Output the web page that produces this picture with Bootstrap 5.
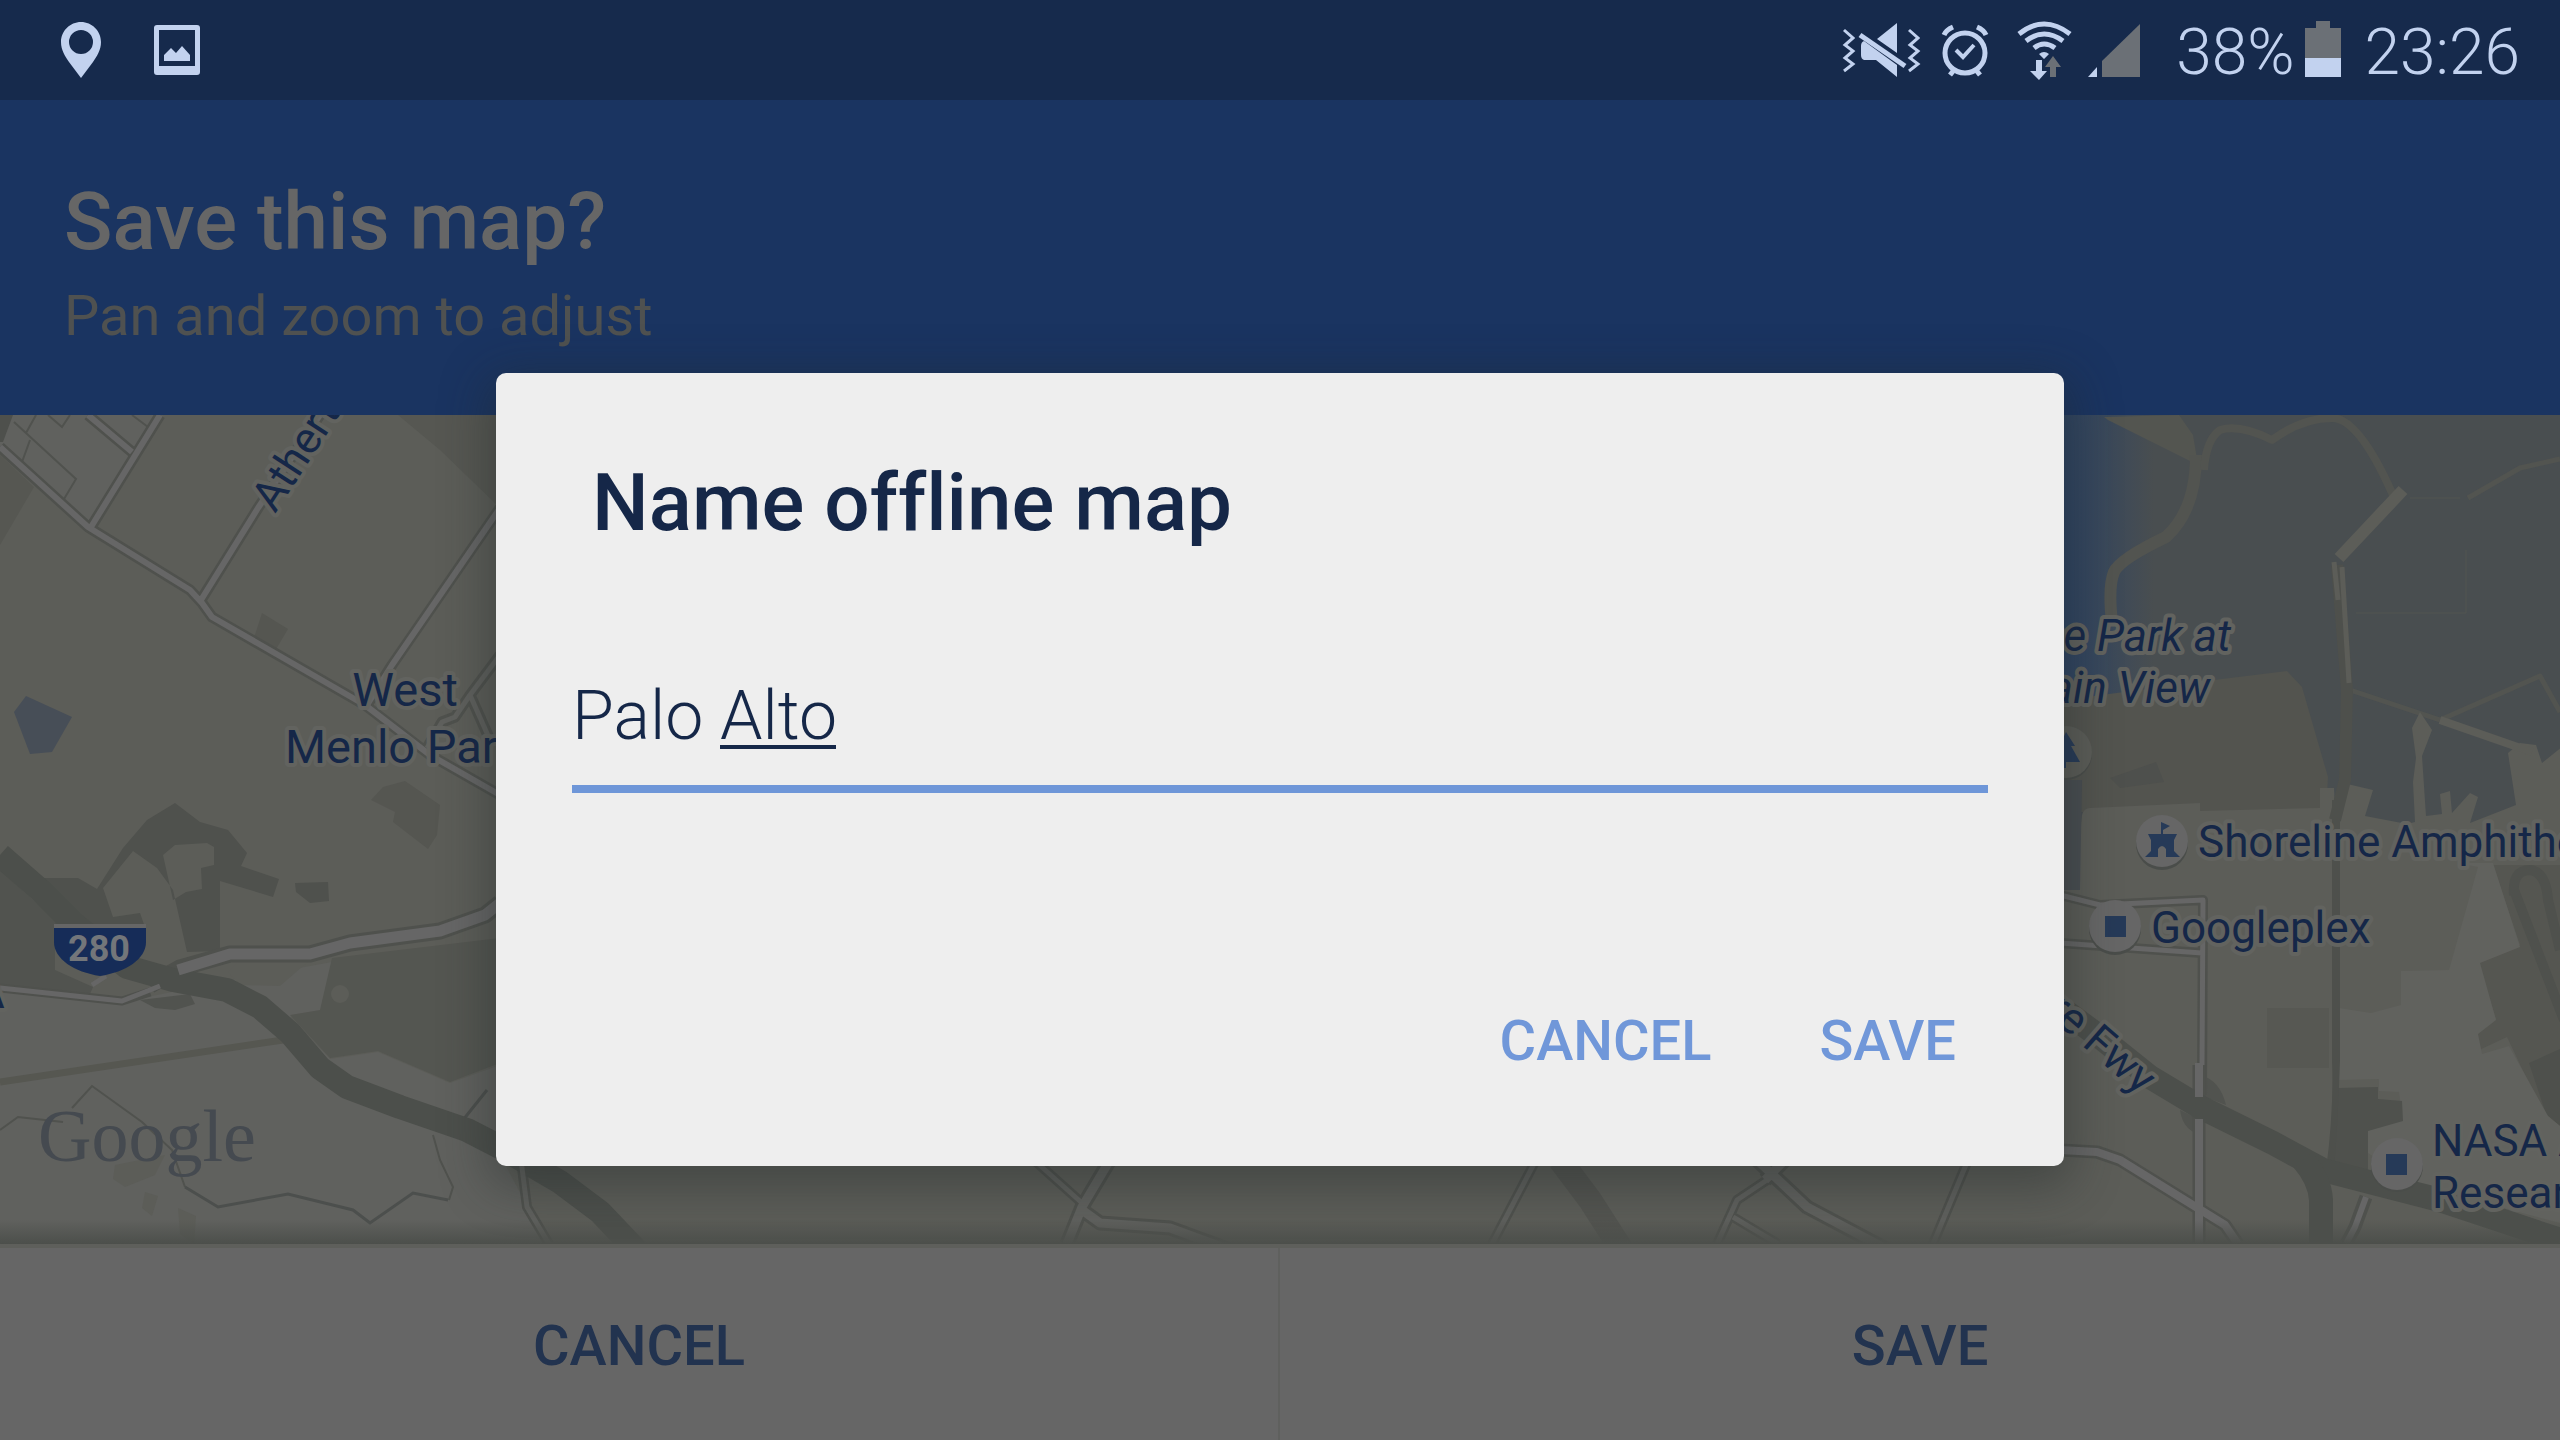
<!DOCTYPE html>
<html lang="en">
<head>
<meta charset="utf-8">
<meta name="viewport" content="width=device-width, initial-scale=1">
<title>Name offline map</title>
<link href="https://cdn.jsdelivr.net/npm/bootstrap@5.3.0/dist/css/bootstrap.min.css" rel="stylesheet">
<style>
  body { font-family: Roboto, "Noto Sans", sans-serif; background: #666; color: #152748; }
  .status-bar { height: 100px; background: #162a4c; color: #c2d2ef; padding: 0 40px 0 58px; }
  .status-bar svg { height: 60px; flex: none; }
  .status-icons { gap: 16px; }
  .status-text { font-size: 64px; line-height: 64px; font-weight: 300; padding-top: 6px; }
  .app-head { background: #1a3461; padding: 74px 64px 67px; }
  .title-text { font-size: 80px; line-height: 96px; font-weight: 500; font-variant-ligatures: none; }
  .app-head .title-text { color: #666; }
  .sub-text { font-size: 56px; line-height: 64px; color: #4f5150; margin-top: 14px; }
  .map-area { background: #5c5d58; min-height: 400px; }
  .map-area svg { position: absolute; inset: 0; width: 100%; height: 100%; }
  .map-area::after { content: ""; position: absolute; inset: auto 0 0 0; height: 24px; background: linear-gradient(transparent, #4c4f4b); }
  .action-bar { height: 196px; background: #666; border-top: 4px solid #5e5f5b; }
  .flat-btn { font-size: 56px; line-height: 64px; font-weight: 500; border: 0; background: none; border-radius: 0; padding: 0 32px; }
  .action-bar .flat-btn { color: #22334f; padding-top: 4px; }
  .action-bar .flat-btn:first-child { border-right: 2px solid #5f605e; }
  .dialog-layer { position: absolute; inset: 98px 0 0 0; }
  .name-dialog { width: 61.25%; background: #eee; border: 0; border-radius: 10px; padding: 82px 76px 93px; box-shadow: 0 12px 48px 8px rgba(34, 40, 40, .42); color: #152748; }
  .name-dialog .title-text { padding-left: 20px; margin-bottom: 123px; }
  .name-field { font-size: 68px; line-height: 84px; height: 119px; font-weight: 300; color: #152748; background: none; border: 0; border-bottom: 8px solid #6e96d8; border-radius: 0; padding: 0 0 27px; }
  .name-field:focus { background: none; box-shadow: none; border-color: #6e96d8; color: #152748; }
  .compose-line { position: absolute; left: 148px; top: 71px; width: 116px; height: 4px; background: #152748; }
  .dialog-actions { margin-top: 216px; gap: 44px; }
  .dialog-actions .flat-btn { color: #7097d9; }
  /* map drawing */
  .rd { fill: none; stroke: #666; stroke-linejoin: round; }
  .cs { fill: none; stroke: #4f514d; stroke-linejoin: round; }
  .hw { fill: none; stroke: #4c4f4b; stroke-width: 24; stroke-linejoin: round; }
  .lbl { font-size: 44px; fill: #152748; stroke: #62635f; stroke-width: 8; stroke-linejoin: round; paint-order: stroke; }
  .town { font-size: 47px; }
</style>
</head>
<body>
<div class="d-flex flex-column min-vh-100 position-relative overflow-hidden">

  <div class="status-bar d-flex align-items-center">
    <svg viewBox="58 20 46 60" width="46" aria-hidden="true"><path fill="#c2d2ef" fill-rule="evenodd" d="M81 22c-11 0-20 9-20 20 0 8 4 14 8 20l12 16 12-16c4-6 8-12 8-20 0-11-9-20-20-20zm0 8a12 12 0 1 1 0 24 12 12 0 0 1 0-24z"/></svg>
    <svg class="ms-5" viewBox="152 20 50 60" width="50" aria-hidden="true"><path fill="#c2d2ef" fill-rule="evenodd" d="M157 25h40q3 0 3 3v44q0 3-3 3h-40q-3 0-3-3V28q0-3 3-3zm2 5v36h36V30z"/><path fill="#c2d2ef" d="M164 61V55l7-7 5 5 6-7 8 9v6z"/></svg>

    <div class="status-icons d-flex align-items-center ms-auto">
      <svg viewBox="1836 20 84 60" width="84" aria-hidden="true"><g fill="none" stroke="#c2d2ef" stroke-width="3"><path d="M1840 30l9 8-8 7 8 6-8 7 8 6-9 7M1905 30l9 8-8 7 8 6-8 7 8 6-9 7"/><path stroke-width="5" d="M1856 35l45 31"/></g><path fill="#c2d2ef" d="M1893 23v30l-20-14zM1860 41l33 24v12l-21-17h-12q-3-1-3-5v-9q0-4 3-5z"/></svg>
      <svg viewBox="1936 20 54 60" width="54" aria-hidden="true"><g fill="none" stroke="#c2d2ef" stroke-width="5"><ellipse cx="1961" cy="53" rx="20" ry="20"/><path stroke-width="4" d="M1952 50l7 7 11-12"/><path d="M1940 35q2-5 9-8M1982 35q-2-5-9-8M1950 70l-4 5M1972 70l4 5"/></g></svg>
      <svg viewBox="2006 18 62 60" width="62" aria-hidden="true"><g fill="none" stroke="#c2d2ef" stroke-width="5"><path d="M2015 32q25-20 51 0M2022 39q18-14 37 0M2030 46q10-8 21 0"/></g><path fill="#c2d2ef" d="M2035 52q5-4 10 0l-5 5zM2032 58h6v11h5l-8 9-9-9h6z"/><path fill="#6b7076" d="M2049 54l8 11h-5v10h-6V65h-5z"/></svg>
      <svg viewBox="2084 20 72 60" width="72" aria-hidden="true"><path fill="#c2d2ef" d="M2084 77l9-10v10z"/><path fill="#6b7076" d="M2098 77V61l38-37v53z"/></svg>
      <span class="status-text">38%</span>
      <svg viewBox="2304 20 44 60" width="44" style="margin-left:-6px" aria-hidden="true"><path fill="#6b7076" d="M2304 28h11v-7h14v7h11v30h-36z"/><path fill="#c2d2ef" d="M2304 58h36v19h-36z"/></svg>
      <span class="status-text">23:26</span>
    </div>
  </div>

  <header class="app-head">
    <h1 class="title-text m-0">Save this map?</h1>
    <p class="sub-text mb-0">Pan and zoom to adjust</p>
  </header>

  <main class="map-area flex-grow-1 position-relative overflow-hidden">
    <svg viewBox="0 415 2560 829" preserveAspectRatio="xMidYMid slice" role="img" aria-label="Map of Palo Alto">
      <defs>
        <linearGradient id="bay"><stop offset="0" stop-color="#24406a" stop-opacity=".75"/><stop offset="1" stop-color="#24406a" stop-opacity="0"/></linearGradient>
      </defs>
      <!-- land cover, west -->
      <path fill="#60615e" d="M12 415H163L88 527 0 447V440z"/>
      <path fill="#4e504c" d="M0 415H13L3 442H0z"/>
      <path fill="#565752" d="M0 455l34 32L0 545z"/>
      <path fill="#565752" d="M398 415H500V508L440 450z"/>
      <g fill="none" stroke="#50524e" stroke-width="2"><path d="M14 422l62 57-12 20M30 440l-8 22M36 415l-10 18M48 415l14 12 8-12M132 415l16 12"/></g>
      <path fill="#474e57" d="M26 696L72 717 52 752 30 754 14 712z"/>
      <path fill="#555651" d="M262 613l26 16-13 22-21-13z"/>
      <path fill="#555651" d="M371 800l12-13 22-6 35 24-3 30-9 14-35-27 2-10z"/>
      <path fill="#4f514d" fill-rule="evenodd" d="M147 820L175 803 200 822 228 830 247 853 241 866 279 879 273 897 220 881V951L187 952 173 890 157 868 133 851 103 888 113 917 140 913 146 930 55 925 40 878H78L97 889 123 848zM163 855L173 900 186 892 202 889 201 868 214 865V847L207 843 175 845z"/>
      <path fill="#4f514d" d="M295 883l33-1 1 19-19 2-14-11z"/>
      <path fill="#51534f" d="M0 870l55 50v50l38 17-3 7-90-6z"/>
      <path fill="#60615e" d="M0 988l122 14 100-20 110-20-12 50-30 5 40 42 48-7 72 31 50-18v90l50 94H0z"/>
      <path fill="#545651" d="M332 958L500 938v125l-50 19-72-31-48 7-40-43 30-5z"/>
      <circle cx="340" cy="994" r="9" fill="#5c5d58"/>
      <path fill="#5c5d58" d="M228 972l10-10 72-2-30 26-40-1zM115 1165l50-10-10 20-30 12-12-8zM145 1192l13 4-6 20-10-8zM178 1208l18 8-2 28-14-10z"/>
      <path fill="#51534f" d="M140 1000l50-6 5 10-20 6-20-2z"/>
      <path fill="none" stroke="#565751" stroke-width="7" d="M0 1082L283 1040"/>
      <path fill="none" stroke="#50524e" stroke-width="2" d="M0 1130l18-13 45 5M72 1108l20-22 50 36 30 28 13 37M433 1135l7 25 13 27-4 13"/>
      <path fill="none" stroke="#4c4f4d" stroke-width="3" d="M185 1187l33 20 70-13 65 16 17 13 43-30 35 7M463 1120l24-30"/>

      <!-- land cover, east -->
      <path fill="#494e50" d="M2040 415h520v420H2040z"/>
      <path fill="url(#bay)" d="M2064 415h90v285h-90z"/>
      <path fill="#535550" d="M2104 417l75-2 14 20 5 30-90-45z"/>
      <g fill="none" stroke="#525450" stroke-width="12" stroke-linejoin="round"><path d="M2196 455q0 55-30 82-46 22-52 35-6 15-2 50"/><path stroke-width="8" d="M2204 470q2-30 16-40 20-6 52 10 30-22 60-22 28 0 64 84"/><path stroke-width="5" d="M2350 690l90 30M2440 720l100-44 20 36M2468 498l52-30 40-9"/><path stroke-width="1" d="M2466 550v63h-110M2410 498h50"/></g>
      <path fill="#53544f" d="M2064 700l150-20 73-9 15 16 26 90-2 35H2064z"/>
      <path fill="#4e504d" d="M2110 778l46-16 8 20-44 6z"/>
      <path fill="#5c5d58" d="M2082 815q2-7 8-7l110-5v8l120-3v-20h14l1 22 8-27 30 7-8 26 42 8 8-2-2-40 3-24-4-30 8-16 12 18-10 26 4 60 16-2-2-20 10-3 2 22 18-20 8 4-8 26 46-18-8-52 12-10 16 2 6 18 20-16v400H2064V970z"/>
      <path fill="none" stroke="#4e504c" stroke-width="12" d="M2337 565l10 125-2 90-10 40"/>
      <path fill="none" stroke="#5c5d58" stroke-width="12" d="M2403 490l-64 68"/>
      <path fill="none" stroke="#5c5d58" stroke-width="5" d="M2334 562l4 38M2342 567l7 116"/>
      <path fill="none" stroke="#5c5d58" stroke-width="8" d="M2440 720l92 32"/>
      <path fill="#494e52" d="M2064 780h18l-2 110h-16z"/>
      <path fill="#555651" d="M2493 865h67v260l-15-8-38-80-30 14-3-20 22-12-18-56 42-18z"/>
      <path fill="none" stroke="#4f514d" stroke-width="10" d="M2514 895q-2-25 16-25 16 2 18 30l12 50M2514 890l50 130"/>
      <path fill="#4e504c" d="M2529 1063l31-14v77l-14-12z"/>
      <path fill="#61625e" d="M2458 863h35l27 84-40 16 16 57-18 14 4 20 27-8 39 70 12 10v97l-143-38-49-32v-28l21-3 13-8-3-22-20-1v-12l-40 1v-72l32 5 30-8v-34l48-1 29-103z"/>
      <path fill="#4f514d" d="M2338 1088l40-1v12l24 2 1 20-35 10v40l-40-6z"/>
      <path fill="#575853" d="M2267 1008h62v60h-62z"/>
      <path fill="#51534f" d="M2200 1075q20 5 26 30l-26-10zM2180 1110l20 10 5 15q-22-2-25-25z"/>
      <path fill="#4e504c" d="M2332 800h8v260q-2 60-6 110h-8q8-60 6-110z"/>

      <!-- roads: casings first -->
      <g class="cs">
        <path stroke-width="11" d="M0 447L88 527 190 590 202 603 212 617 365 705 430 755 500 795M160 415L91 527M88 415L132 452M350 370L258 508 201 600M500 508L392 665 367 705M500 655L470 695 455 717 442 722 427 748M470 695L490 740"/>
        <path stroke-width="9" d="M0 988L122 1001 150 992"/>
        <path stroke-width="17" d="M150 985L180 968 230 954H310L350 943 440 931 485 915 500 903"/>
        <path stroke-width="10" d="M2060 895L2100 905 2203 900 2202 1095M2060 943L2202 953"/>
        <path stroke-width="13" d="M2199 1065V1244M2060 1150L2097 1152 2120 1160 2225 1225 2238 1244M2366 1197L2355 1227 2346 1244"/>
        <path stroke-width="10" d="M521 1160L527 1207 549 1244M1034 1160L1082 1203M1536 1160L1492 1244M1767 1180L1737 1200 1717 1244M1733 1217L1778 1244M1968 1160L1933 1244"/>
        <path stroke-width="15" d="M1110 1160L1082 1207 1067 1244M1082 1210L1100 1223 1170 1228 1230 1250M1757 1160L1807 1207 1888 1250M1790 1155L1765 1180"/>
      </g>
      <path class="hw" d="M0 855L40 890 73 923 127 967 173 980 227 990 260 1007 290 1033 320 1068 347 1087 400 1107 467 1130 500 1147 560 1182 600 1212 636 1250"/>
      <path class="hw" d="M2050 1000L2100 1037 2150 1077 2200 1107 2273 1143 2323 1170 2373 1183 2440 1200 2560 1240"/>
      <path class="hw" d="M2303 1160Q2320 1180 2321 1200V1250"/>
      <path class="hw" stroke-opacity=".6" d="M1560 1160L1590 1200 1622 1250"/>
      <g class="rd">
        <path stroke-width="6" d="M0 447L88 527 190 590 202 603 212 617 365 705 430 755 500 795M160 415L91 527M88 415L132 452M350 370L258 508 201 600M500 508L392 665 367 705"/>
        <path stroke-width="5" stroke="#5f605d" d="M500 655L470 695 455 717 442 722 427 748M470 695L490 740"/>
        <path stroke-width="5" d="M0 988L122 1001 160 986M92 985l14-9"/>
        <path stroke-width="11" d="M178 970L230 954H310L350 943 440 931 485 915 500 903"/>
        <path stroke-width="5" d="M2060 895L2100 905 2203 900 2202 1065M2060 943L2202 953"/>
        <path stroke-width="8" d="M2199 1063v34M2199 1119V1244M2060 1150L2097 1152 2120 1160 2225 1225 2238 1244"/>
        <path stroke-width="6" d="M2366 1197L2355 1227 2346 1244"/>
        <path stroke="#5f605d" stroke-width="5" d="M521 1160L527 1207 549 1244M1034 1160L1082 1203M1536 1160L1492 1244M1767 1180L1737 1200 1717 1244M1733 1217L1778 1244M1968 1160L1933 1244"/>
        <path stroke="#60615e" stroke-width="9" d="M1110 1160L1082 1207 1067 1244M1082 1210L1100 1223 1170 1228 1230 1250M1757 1160L1807 1207 1888 1250M1790 1155L1765 1180"/>
      </g>

      <!-- interstate shield -->
      <path fill="#666" d="M54 924h92v5H54z"/>
      <path fill="#162c58" d="M54 928h92v14c0 17-20 30-46 34-26-4-46-17-46-34z"/>
      <text x="99" y="961" text-anchor="middle" font-size="36" font-weight="700" fill="#73767a">280</text>

      <!-- markers -->
      <g fill="#4a4d4a"><circle cx="2162" cy="844" r="26"/><circle cx="2115" cy="929" r="26"/><circle cx="2397" cy="1166" r="26"/><circle cx="2066" cy="754" r="26"/></g>
      <g fill="#666"><circle cx="2162" cy="841" r="26"/><circle cx="2115" cy="926" r="26"/><circle cx="2397" cy="1164" r="26"/><circle cx="2066" cy="752" r="26" fill="#5c5d58"/></g>
      <g fill="#263a58"><path d="M2105 916h21v21h-21zM2386 1154h21v21h-21z"/><path d="M2066 732l9 14h-4l9 16h-14v6h-4v-6h-10z"/><path fill-rule="evenodd" d="M2161 822l9 4-7 4v4h14l-3 6v11l6 6h-35l6-6v-11l-3-6h13zm-3 35h8v-8q-4-6-8 0z"/></g>

      <!-- labels -->
      <text class="lbl town" x="405" y="706" text-anchor="middle">West</text>
      <text class="lbl town" x="285" y="763">Menlo Park</text>
      <text class="lbl" font-style="italic" x="2231" y="651" text-anchor="end">Shoreline Park at</text>
      <text class="lbl" font-style="italic" x="2210" y="703" text-anchor="end">Mountain View</text>
      <text class="lbl" x="2198" y="857">Shoreline Amphitheatre</text>
      <text class="lbl" x="2151" y="943">Googleplex</text>
      <text class="lbl" x="2432" y="1156">NASA Ames</text>
      <text class="lbl" x="2432" y="1208">Research Center</text>
      <text class="lbl" transform="translate(275 514) rotate(-57)">Atherton</text>
      <text class="lbl" transform="translate(2140 1096) rotate(41)" text-anchor="end">Bayshore Fwy</text>
      <text class="lbl" x="-24" y="1008">A</text>
      <text x="38" y="1161" font-size="74" font-family="'Liberation Serif', serif" fill="#454a50">Google</text>
    </svg>
  </main>

  <footer class="action-bar d-flex">
    <button type="button" class="btn flat-btn flex-fill w-50">CANCEL</button>
    <button type="button" class="btn flat-btn flex-fill w-50">SAVE</button>
  </footer>

  <div class="dialog-layer d-flex align-items-center justify-content-center">
    <form class="card name-dialog" role="dialog" aria-labelledby="dialog-title">
      <label class="title-text" id="dialog-title" for="map-name">Name offline map</label>
      <div class="position-relative">
        <input type="text" class="form-control name-field" id="map-name" value="Palo Alto" spellcheck="false" autocomplete="off">
        <span class="compose-line"></span>
      </div>
      <div class="dialog-actions d-flex justify-content-end">
        <button type="button" class="btn flat-btn">CANCEL</button>
        <button type="button" class="btn flat-btn">SAVE</button>
      </div>
    </form>
  </div>
</div>
<script src="https://cdn.jsdelivr.net/npm/bootstrap@5.3.0/dist/js/bootstrap.bundle.min.js"></script>
</body>
</html>
